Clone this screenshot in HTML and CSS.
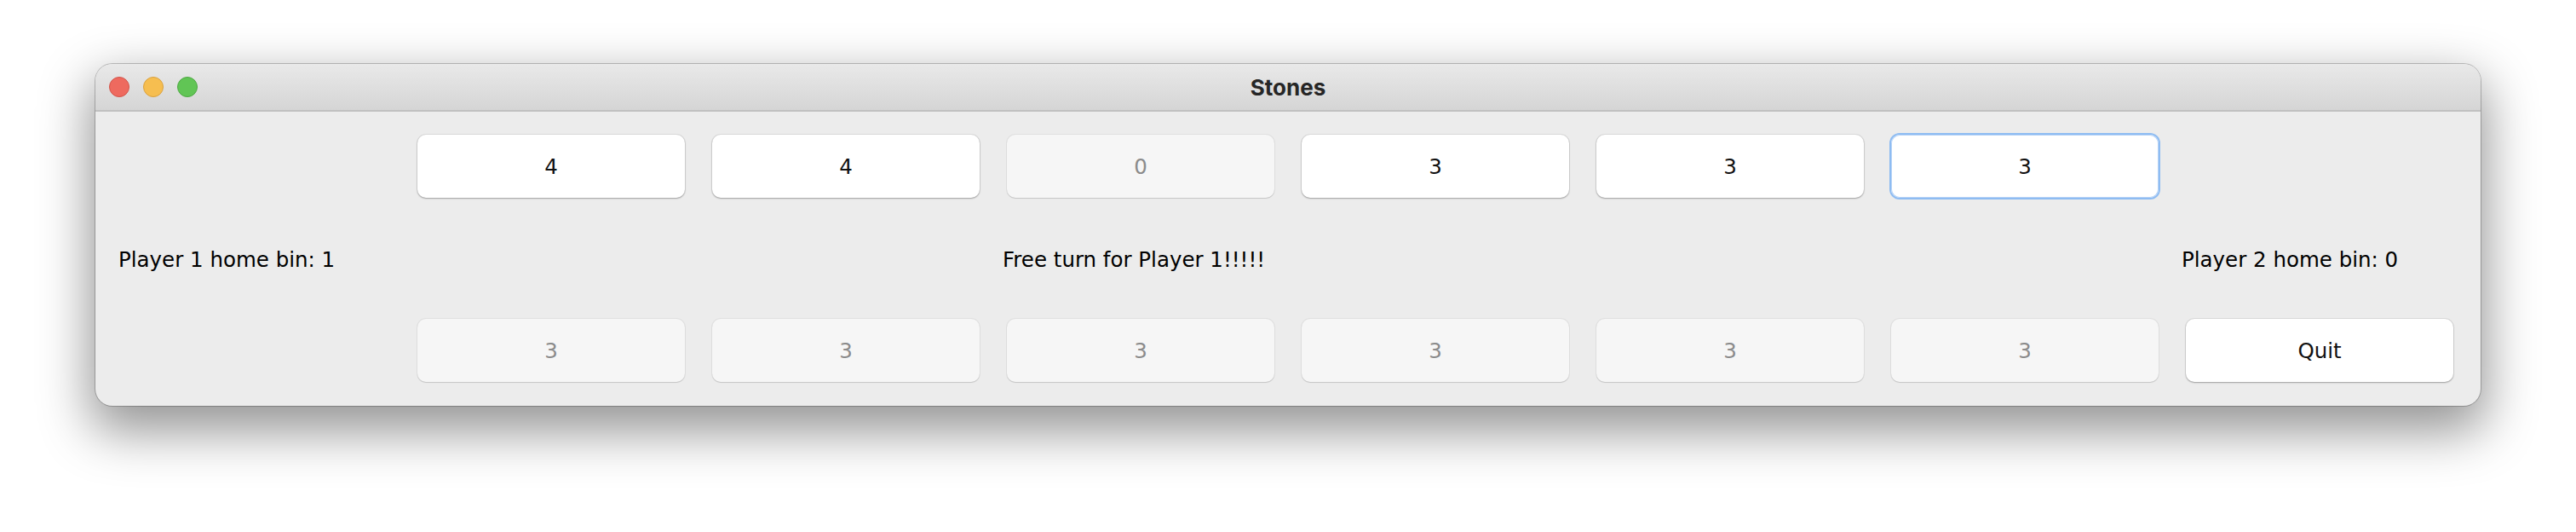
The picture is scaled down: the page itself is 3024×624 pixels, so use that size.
FILE: index.html
```html
<!DOCTYPE html>
<html lang="en">
<head>
    <meta charset="UTF-8">
    <title>Stones</title>
    <link rel="stylesheet" href="styles.css">
</head>
<body>
    <div class="window">
        <div class="titlebar">
            <div class="lights">
                <span class="light close"></span>
                <span class="light minimize"></span>
                <span class="light zoom"></span>
            </div>
            <div class="title">Stones</div>
            <div></div>
        </div>

        <div class="board">
            <!-- player 2 pits -->
            <div></div>
            <button class="pit">4</button>
            <button class="pit">4</button>
            <button class="pit" disabled>0</button>
            <button class="pit">3</button>
            <button class="pit">3</button>
            <button class="pit focused">3</button>
            <div></div>

            <!-- status row -->
            <div class="label">Player 1 home bin: 1</div>
            <div></div>
            <div></div>
            <div class="label">Free turn for Player 1!!!!!</div>
            <div></div>
            <div></div>
            <div></div>
            <div class="label">Player 2 home bin: 0</div>

            <!-- player 1 pits -->
            <div></div>
            <button class="pit" disabled>3</button>
            <button class="pit" disabled>3</button>
            <button class="pit" disabled>3</button>
            <button class="pit" disabled>3</button>
            <button class="pit" disabled>3</button>
            <button class="pit" disabled>3</button>
            <button class="pit">Quit</button>
        </div>
    </div>
</body>
</html>
```

FILE: styles.css
```css
/* page */
html {
    background: #ffffff;
}
body {
    margin: 0;
    min-height: 624px;
    box-sizing: border-box;
    padding: 75px 0 0 112px;
    font-family: 'DejaVu Sans', 'Liberation Sans', sans-serif;
    color: #000;
}

/* window frame */
.window {
    width: 2800px;
    background: #ececec;
    border-radius: 20px;
    overflow: hidden;
    box-shadow: 0 0 0 1px rgba(0, 0, 0, 0.22),
                0 24px 60px 6px rgba(0, 0, 0, 0.42);
}
.titlebar {
    height: 54px;
    display: grid;
    grid-template-columns: 1fr auto 1fr;
    align-items: center;
    background: linear-gradient(to bottom, #e9e9e9 0%, #d5d5d5 100%);
    border-bottom: 2px solid #c0c0c0;
    padding: 0 16px;
}
.lights {
    display: flex;
    gap: 16px;
}
.light {
    width: 22px;
    height: 22px;
    border-radius: 50%;
    border: 1px solid;
}
.close {
    background: #ee6a5f;
    border-color: #d2544a;
}
.minimize {
    background: #f6be50;
    border-color: #d9a13f;
}
.zoom {
    background: #61c555;
    border-color: #4ea843;
}
.title {
    font-family: Inter, 'DejaVu Sans', sans-serif;
    font-size: 26px;
    font-weight: 700;
    color: #262626;
}

/* game board */
.board {
    display: grid;
    grid-template-columns: repeat(8, 314px);
    grid-template-rows: repeat(3, 74px);
    column-gap: 32px;
    row-gap: 34px;
    padding: 27px 32px 28px;
}
.label {
    align-self: center;
    margin: 3px 0 0 -5px;
    font-size: 24.5px;
    white-space: nowrap;
}
.pit {
    font-family: inherit;
    font-size: 24.5px;
    color: #111;
    background: #fff;
    border: none;
    border-radius: 10px;
    padding: 0;
    box-shadow: 0 0 0 1px rgba(0, 0, 0, 0.07),
                0 1px 2px rgba(0, 0, 0, 0.28);
}
.pit:disabled {
    background: #f6f6f6;
    color: #8b8b8b;
    box-shadow: 0 0 0 1px rgba(0, 0, 0, 0.05),
                0 1px 1px rgba(0, 0, 0, 0.12);
}
.pit.focused {
    box-shadow: 0 0 0 2px #8ebcf2,
                inset 0 0 0 1px #b5d2f6;
}
```
